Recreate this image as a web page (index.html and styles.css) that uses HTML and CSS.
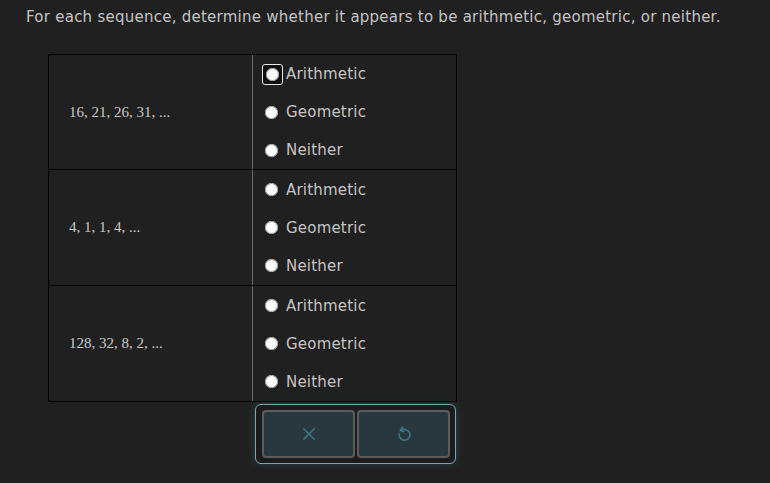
FILE: index.html
```html
<!DOCTYPE html>
<html>
<head>
<meta charset="utf-8">
<link rel="stylesheet" href="styles.css">
</head>
<body>
<p class="prompt">For each sequence, determine whether it appears to be arithmetic, geometric, or neither.</p>
<div class="table">
  <div class="row">
    <div class="seq">16, 21, 26, 31, ...</div>
    <div class="opts">
      <label class="opt"><span class="focus"><span class="radio"></span></span><span class="lbl tight">Arithmetic</span></label>
      <label class="opt"><span class="radio"></span><span class="lbl">Geometric</span></label>
      <label class="opt"><span class="radio"></span><span class="lbl">Neither</span></label>
    </div>
  </div>
  <div class="row">
    <div class="seq">4, 1, 1, 4, ...</div>
    <div class="opts">
      <label class="opt"><span class="radio"></span><span class="lbl">Arithmetic</span></label>
      <label class="opt"><span class="radio"></span><span class="lbl">Geometric</span></label>
      <label class="opt"><span class="radio"></span><span class="lbl">Neither</span></label>
    </div>
  </div>
  <div class="row">
    <div class="seq">128, 32, 8, 2, ...</div>
    <div class="opts">
      <label class="opt"><span class="radio"></span><span class="lbl">Arithmetic</span></label>
      <label class="opt"><span class="radio"></span><span class="lbl">Geometric</span></label>
      <label class="opt"><span class="radio"></span><span class="lbl">Neither</span></label>
    </div>
  </div>
</div>
<div class="actions-wrap">
  <div class="actions">
    <button class="btn" aria-label="Clear">
      <svg width="14" height="14" viewBox="0 0 14 14"><path d="M1.5 1.5 L12.5 12.5 M12.5 1.5 L1.5 12.5" stroke="#3f7585" stroke-width="1.6" fill="none"/></svg>
    </button>
    <button class="btn" aria-label="Reset">
      <svg width="16" height="18" viewBox="0 0 16 18"><path d="M5.2 5.6 A5.4 5.4 0 1 1 3.4 8.2" stroke="#3f7585" stroke-width="1.6" fill="none"/><path d="M6.8 1.8 L4.4 5.4 L8.2 7" stroke="#3f7585" stroke-width="1.6" fill="none"/></svg>
    </button>
  </div>
</div>
</body>
</html>
```
FILE: styles.css
```css
*, *::before, *::after {
  box-sizing: border-box;
}
html, body {
  margin: 0;
  padding: 0;
  background: #202020;
}
body {
  width: 770px;
  height: 483px;
  overflow: hidden;
  font-family: "DejaVu Sans", Verdana, sans-serif;
  color: #c4c4c4;
}
.prompt {
  margin: 0;
  padding: 8px 0 0 26px;
  font-size: 15px;
  line-height: 18px;
  height: 54px;
  letter-spacing: 0.25px;
}
.table {
  margin-left: 48px;
  width: 409px;
  border: 1px solid #000;
}
.row {
  display: grid;
  grid-template-columns: 204px 1fr;
  height: 114px;
}
.row + .row {
  border-top: 1px solid #000;
  height: 116px;
}
.seq {
  display: flex;
  align-items: center;
  padding-left: 20px;
  font-family: "Liberation Serif", "Times New Roman", serif;
  font-size: 15px;
  color: #c8c8c8;
  border-right: 1px solid #6b6b6b;
}
.opts {
  display: flex;
  flex-direction: column;
  justify-content: center;
}
.opt {
  display: flex;
  align-items: center;
  height: 38px;
  flex: none;
  padding-left: 12px;
}
.radio {
  width: 13px;
  height: 13px;
  border-radius: 50%;
  background: #fff;
  box-shadow: 0 0 0 1px #9a9a9a inset;
  flex: none;
}
.focus {
  display: flex;
  align-items: center;
  justify-content: center;
  width: 21px;
  height: 21px;
  margin-left: -3px;
  border: 1px solid #e8e8e8;
  border-radius: 3px;
  background: #101010;
  flex: none;
}
.lbl {
  margin-left: 8px;
  font-size: 15px;
  color: #c4c4c4;
  letter-spacing: 0.2px;
}
.lbl.tight {
  margin-left: 3px;
}
.actions-wrap {
  padding: 2px 0 0 255px;
}
.actions {
  display: inline-flex;
  gap: 2px;
  padding: 5px 5px 5px 6px;
  border: 1px solid #7aa6b2;
  border-radius: 6px;
  background: #1c1c1c;
  box-shadow: 0 0 8px rgba(90, 160, 180, 0.25);
}
.btn {
  width: 93px;
  height: 48px;
  border: 2px solid #5c5c5c;
  border-radius: 4px;
  background: #29383e;
  display: flex;
  align-items: center;
  justify-content: center;
  padding: 0;
}
.btn svg {
  display: block;
}
```
